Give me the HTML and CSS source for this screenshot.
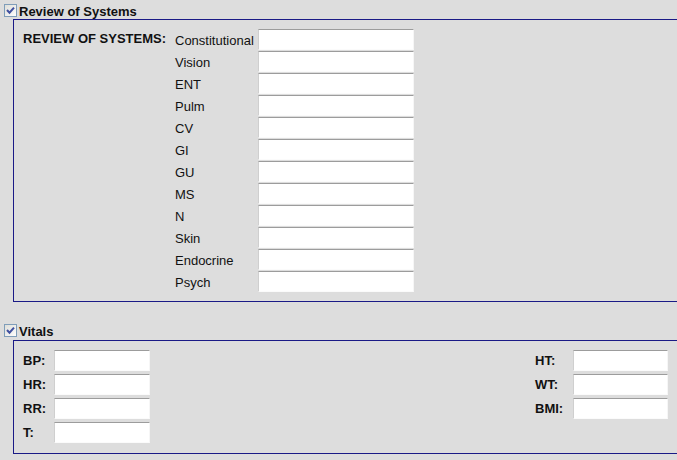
FILE: index.html
```html
<!DOCTYPE html>
<html>
<head>
<meta charset="utf-8">
<link rel="stylesheet" href="styles.css">
</head>
<body>
<section class="sec">
  <div class="hdr">
    <span class="cb"><svg width="13" height="13" viewBox="0 0 13 13"><defs><linearGradient id="g1" x1="0" y1="0" x2="1" y2="1"><stop offset="0" stop-color="#dcdcd7"/><stop offset="1" stop-color="#ffffff"/></linearGradient></defs><rect x="0.5" y="0.5" width="12" height="12" fill="url(#g1)" stroke="#7f9db9"/><polyline points="3,6 5.5,8.7 10,3.6" fill="none" stroke="#4050a0" stroke-width="2"/></svg></span>
    <span class="ttl">Review of Systems</span>
  </div>
  <div class="box ros">
    <div class="ros-title">REVIEW OF SYSTEMS:</div>
    <div class="ros-grid">
      <span class="lbl">Constitutional</span><input class="fld" type="text">
      <span class="lbl">Vision</span><input class="fld" type="text">
      <span class="lbl">ENT</span><input class="fld" type="text">
      <span class="lbl">Pulm</span><input class="fld" type="text">
      <span class="lbl">CV</span><input class="fld" type="text">
      <span class="lbl">GI</span><input class="fld" type="text">
      <span class="lbl">GU</span><input class="fld" type="text">
      <span class="lbl">MS</span><input class="fld" type="text">
      <span class="lbl">N</span><input class="fld" type="text">
      <span class="lbl">Skin</span><input class="fld" type="text">
      <span class="lbl">Endocrine</span><input class="fld" type="text">
      <span class="lbl">Psych</span><input class="fld" type="text">
    </div>
  </div>
</section>
<section class="sec sec2">
  <div class="hdr">
    <span class="cb"><svg width="13" height="13" viewBox="0 0 13 13"><defs><linearGradient id="g2" x1="0" y1="0" x2="1" y2="1"><stop offset="0" stop-color="#dcdcd7"/><stop offset="1" stop-color="#ffffff"/></linearGradient></defs><rect x="0.5" y="0.5" width="12" height="12" fill="url(#g2)" stroke="#7f9db9"/><polyline points="3,6 5.5,8.7 10,3.6" fill="none" stroke="#4050a0" stroke-width="2"/></svg></span>
    <span class="ttl">Vitals</span>
  </div>
  <div class="box vitals">
    <div class="vgrid vleft">
      <span class="vlbl">BP:</span><input class="fld" type="text">
      <span class="vlbl">HR:</span><input class="fld" type="text">
      <span class="vlbl">RR:</span><input class="fld" type="text">
      <span class="vlbl">T:</span><input class="fld" type="text">
    </div>
    <div class="vgrid vright">
      <span class="vlbl">HT:</span><input class="fld" type="text">
      <span class="vlbl">WT:</span><input class="fld" type="text">
      <span class="vlbl">BMI:</span><input class="fld" type="text">
    </div>
  </div>
</section>
</body>
</html>
```
FILE: styles.css
```css
html, body {
  margin: 0;
  padding: 0;
  background: #dddddd;
  overflow: hidden;
}
body {
  font-family: "Liberation Sans", Arial, sans-serif;
  font-size: 13px;
  color: #111111;
}
.sec2 {
  margin-top: 18px;
}
.hdr {
  display: flex;
  align-items: flex-start;
  height: 19px;
  box-sizing: border-box;
  padding: 4px 0 0 4px;
}
.sec2 .hdr {
  height: 20px;
}
.cb {
  display: block;
  width: 13px;
  height: 13px;
}
.cb svg {
  display: block;
}
.ttl {
  font-weight: bold;
  line-height: 15px;
  margin-left: 2px;
}
.box {
  margin-left: 13px;
  border: 1px solid #1a1a86;
  border-right: none;
  padding: 9px;
}
.ros {
  display: flex;
  align-items: flex-start;
}
.ros-title {
  width: 152px;
  font-weight: bold;
  line-height: 15px;
  padding-top: 2px;
}
.ros-grid {
  display: grid;
  grid-template-columns: 83px 156px;
  grid-auto-rows: 21px;
  row-gap: 1px;
}
.lbl {
  line-height: 21px;
  padding-top: 1px;
  white-space: nowrap;
}
.fld {
  appearance: none;
  -webkit-appearance: none;
  display: block;
  box-sizing: border-box;
  height: 21px;
  width: 100%;
  margin: 0;
  padding: 0 2px;
  background: #ffffff;
  border-style: solid;
  border-width: 1px;
  border-color: #9c9c9c #f6f6f6 #fbfbfb #cfcfcf;
  border-radius: 0;
  outline: none;
}
.vitals {
  display: flex;
  justify-content: space-between;
  padding-bottom: 10px;
}
.vgrid {
  display: grid;
  grid-auto-rows: 21px;
  row-gap: 3px;
  align-content: start;
}
.vleft {
  grid-template-columns: 31px 96px;
}
.vright {
  grid-template-columns: 38px 95px;
}
.vlbl {
  font-weight: bold;
  line-height: 21px;
}
```
